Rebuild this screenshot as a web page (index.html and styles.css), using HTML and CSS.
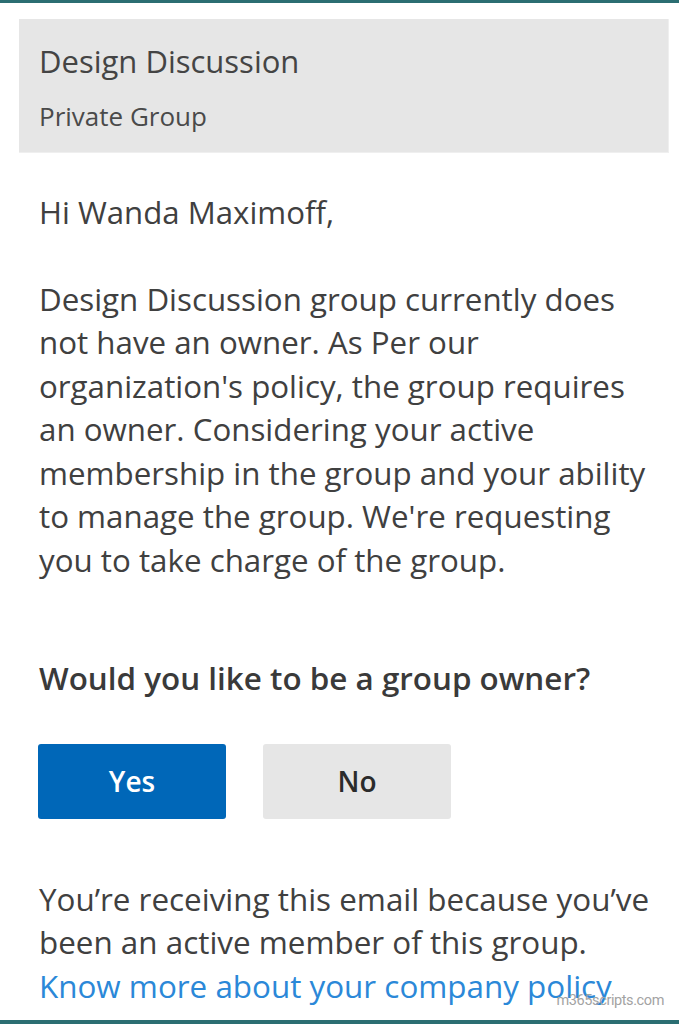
FILE: index.html
```html
<!DOCTYPE html>
<html>
<head>
<meta charset="utf-8">
<link rel="stylesheet" href="styles.css">
</head>
<body>
<div class="frame">
  <div class="header">
    <div class="title">Design Discussion</div>
    <div class="subtitle">Private Group</div>
  </div>
  <div class="content">
    <p class="greet">Hi Wanda Maximoff,</p>
    <p class="para">Design Discussion group currently does<br>not have an owner. As Per our<br>organization's policy, the group requires<br>an owner. Considering your active<br>membership in the group and your ability<br>to manage the group. We're requesting<br>you to take charge of the group.</p>
    <p class="question">Would you like to be a group owner?</p>
    <div class="actions">
      <button class="btn btn-yes">Yes</button>
      <button class="btn btn-no">No</button>
    </div>
    <p class="footer">You’re receiving this email because you’ve<br>been an active member of this group.<br><a class="link" href="#">Know more about your company policy</a></p>
  </div>
  <div class="watermark">m365scripts.com</div>
</div>
</body>
</html>
```
FILE: styles.css
```css
html, body {
  margin: 0;
  padding: 0;
  background: #ffffff;
}
.frame {
  position: relative;
  width: 679px;
  height: 1024px;
  box-sizing: border-box;
  border-top: 3px solid #2b6e72;
  border-bottom: 4px solid #2b6e72;
  font-family: "Open Sans", "Noto Sans", sans-serif;
  color: #404040;
  overflow: hidden;
}
.header {
  margin: 16px 10px 0 19px;
  height: 134px;
  background: #e6e6e6;
  box-sizing: border-box;
  padding: 22px 0 0 20px;
  border-right: 1px solid #efefef;
  border-bottom: 1px solid #efefef;
}
.title {
  font-size: 31px;
  line-height: 40px;
  color: #444444;
}
.subtitle {
  font-size: 26px;
  line-height: 40px;
  margin-top: 15px;
  color: #4a4a4a;
}
.content {
  padding: 0 0 0 39px;
}
.greet {
  margin: 38px 0 0 0;
  font-size: 31.2px;
  line-height: 43.5px;
}
.para {
  margin: 43px 0 0 0;
  font-size: 31.3px;
  line-height: 43.5px;
}
.question {
  margin: 74px 0 0 0;
  font-size: 31.4px;
  line-height: 43.5px;
  font-weight: 600;
  color: #3a3a3a;
}
.actions {
  display: flex;
  gap: 37px;
  margin: 44px 0 0 -1px;
}
.btn {
  width: 188px;
  height: 75px;
  border: none;
  border-radius: 3px;
  font-family: "Open Sans", "Noto Sans", sans-serif;
  font-size: 28px;
  font-weight: 600;
  padding: 0;
}
.btn-yes {
  background: #0067b8;
  color: #ffffff;
}
.btn-no {
  background: #e6e6e6;
  color: #2b2b2b;
}
.footer {
  margin: 58px 0 0 0;
  font-size: 31.4px;
  line-height: 43.5px;
}
.link {
  color: #2b88d8;
  text-decoration: none;
}
.watermark {
  position: absolute;
  right: 15px;
  bottom: 11px;
  font-family: Roboto, "Liberation Sans", sans-serif;
  font-size: 14.5px;
  letter-spacing: -0.4px;
  color: #a3a3a3;
}
```
